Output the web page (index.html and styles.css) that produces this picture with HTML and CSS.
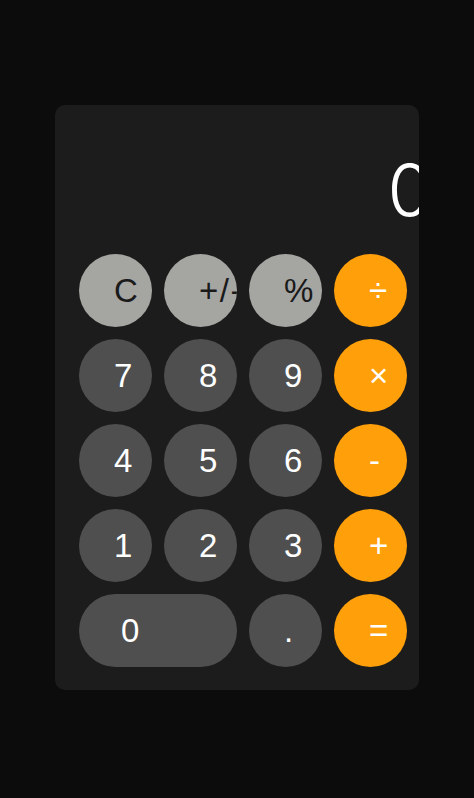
FILE: index.html
```html
<!DOCTYPE html>
<html lang="en">
<head>
<meta charset="utf-8">
<title>Calculator</title>
<link rel="stylesheet" href="styles.css">
</head>
<body>
<div class="calculator">
  <div class="display"><span class="display-value">0</span></div>
  <div class="keypad">
    <button class="key fn">C</button>
    <button class="key fn wide-text">+/-</button>
    <button class="key fn">%</button>
    <button class="key op">÷</button>
    <button class="key num">7</button>
    <button class="key num">8</button>
    <button class="key num">9</button>
    <button class="key op">×</button>
    <button class="key num">4</button>
    <button class="key num">5</button>
    <button class="key num">6</button>
    <button class="key op">-</button>
    <button class="key num">1</button>
    <button class="key num">2</button>
    <button class="key num">3</button>
    <button class="key op">+</button>
    <button class="key num zero">0</button>
    <button class="key num">.</button>
    <button class="key op">=</button>
  </div>
</div>
</body>
</html>
```
FILE: styles.css
```css
html, body {
  margin: 0;
  padding: 0;
  background: #0c0c0c;
  height: 100%;
}
body {
  font-family: "Liberation Sans", Arial, sans-serif;
}
.calculator {
  box-sizing: border-box;
  margin: 105px 0 0 55px;
  width: 364px;
  height: 585px;
  background: #1c1c1c;
  border-radius: 10px;
  overflow: hidden;
  padding: 0 12px 23px 24px;
}
.display {
  box-sizing: border-box;
  height: 149px;
  padding-top: 49px;
  display: flex;
  justify-content: flex-end;
}
.display-value {
  font-family: Inter, "Liberation Sans", sans-serif;
  font-weight: 300;
  font-size: 72px;
  line-height: 72px;
  color: #ffffff;
  margin-right: -25px;
}
.keypad {
  display: grid;
  grid-template-columns: repeat(4, 73px);
  grid-auto-rows: 73px;
  gap: 12px;
}
.key {
  border: none;
  margin: 0;
  border-radius: 37px;
  overflow: hidden;
  font-family: "Liberation Sans", Arial, sans-serif;
  font-size: 33px;
  display: flex;
  align-items: center;
  justify-content: flex-start;
  padding: 0 0 0 35px;
  white-space: nowrap;
  cursor: pointer;
}
.fn {
  background: #a5a5a2;
  color: #1a1a1a;
}
.num {
  background: #4f4f4f;
  color: #ffffff;
}
.op {
  background: #ff9f0a;
  color: #ffffff;
}
.wide-text {
  letter-spacing: 1.5px;
}
.zero {
  grid-column: span 2;
  padding-left: 42px;
}
```
